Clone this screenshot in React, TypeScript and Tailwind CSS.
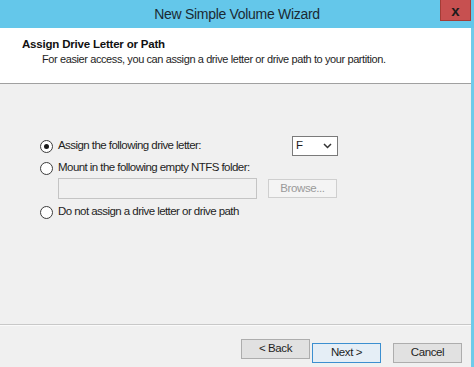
import { ReactNode } from 'react';

const font = { fontFamily: '"Liberation Sans", Arial, sans-serif' };

function Radio({ checked, children }: { checked?: boolean; children: ReactNode }) {
    return (
        <div className="flex items-center h-[16px]">
            <span className="w-[13px] h-[13px] rounded-full border border-[#3c3c3c] bg-white flex items-center justify-center">
                {checked && <span className="w-[5px] h-[5px] rounded-full bg-[#1a1a1a]" />}
            </span>
            <span className="ml-[5px] text-[11.5px] tracking-[-0.55px] text-[#1e1e1e]">{children}</span>
        </div>
    );
}

function Button({ children, primary }: { children: ReactNode; primary?: boolean }) {
    return (
        <button
            className={
                primary
                    ? 'w-[69px] h-[20px] border border-[#3c8fd0] bg-[#e5eef6] text-[11.5px] tracking-[-0.4px] text-[#1e1e1e]'
                    : 'w-[69px] h-[20px] border border-[#adadad] bg-[#e1e1e1] text-[11.5px] tracking-[-0.4px] text-[#1e1e1e]'
            }
        >
            {children}
        </button>
    );
}

export default function App() {
    return (
        <div className="w-[474px] h-[367px] flex flex-col bg-[#6fcbea] overflow-hidden" style={font}>
            {/* title bar */}
            <div className="h-[28px] shrink-0 grid grid-cols-[34px_1fr_34px] bg-[#64c7ea]">
                <div />
                <div className="flex items-center justify-center">
                    <span className="text-[14px] tracking-[-0.3px] text-[#1b2a33] mt-[1px]">New Simple Volume Wizard</span>
                </div>
                <div className="pr-[3px]">
                    <div className="h-[21px] bg-[#c75050] border-x border-b border-[#a33c36] flex items-center justify-center">
                        <span className="text-[15px] font-bold text-[#1c1c1c] leading-none">x</span>
                    </div>
                </div>
            </div>

            {/* client area */}
            <div className="flex-1 flex flex-col mr-[3px] bg-[#f0f0f0]">
                <div className="h-[56px] bg-white border-b border-[#a0a0a0] pt-[9px] flex flex-col">
                    <div className="pl-[22px] text-[11.5px] font-bold tracking-[-0.2px] text-[#111] leading-[14px]">
                        Assign Drive Letter or Path
                    </div>
                    <div className="pl-[42px] mt-[2px] text-[11px] tracking-[-0.4px] text-[#1e1e1e] leading-[13px]">
                        For easier access, you can assign a drive letter or drive path to your partition.
                    </div>
                </div>

                <div className="flex-1 flex flex-col pl-[40px] pt-[52px] border-b border-[#c8c8c8]">
                    <div className="flex items-center">
                        <Radio checked>Assign the following drive letter:</Radio>
                        <div className="ml-auto mr-[133px] w-[46px] h-[20px] border border-[#7a7a7a] bg-white flex items-center justify-between pl-[3px] pr-[5px]">
                            <span className="text-[11.5px] text-[#1e1e1e]">F</span>
                            <svg width="9" height="6" viewBox="0 0 9 6">
                                <path d="M1 1 L4.5 4.5 L8 1" stroke="#333" strokeWidth="1.5" fill="none" />
                            </svg>
                        </div>
                    </div>
                    <div className="mt-[4px]">
                        <Radio>Mount in the following empty NTFS folder:</Radio>
                    </div>
                    <div className="flex items-center mt-[2px] ml-[18px]">
                        <div className="w-[199px] h-[21px] border border-[#c4c4c4] bg-[#f0f0f0]" />
                        <div className="ml-[11px] w-[69px] h-[19px] border border-[#cfcfcf] bg-[#f4f4f4] flex items-center justify-center text-[11.5px] tracking-[-0.4px] text-[#9a9a9a]">
                            Browse...
                        </div>
                    </div>
                    <div className="mt-[5px]">
                        <Radio>Do not assign a drive letter or drive path</Radio>
                    </div>
                </div>

                <div className="h-[42px] border-t border-[#fafafa] flex items-start pt-[13px] pl-[241px]">
                    <Button>&lt; Back</Button>
                    <div className="ml-[2px]">
                        <Button primary>Next &gt;</Button>
                    </div>
                    <div className="ml-[12px]">
                        <Button>Cancel</Button>
                    </div>
                </div>
            </div>
        </div>
    );
}
